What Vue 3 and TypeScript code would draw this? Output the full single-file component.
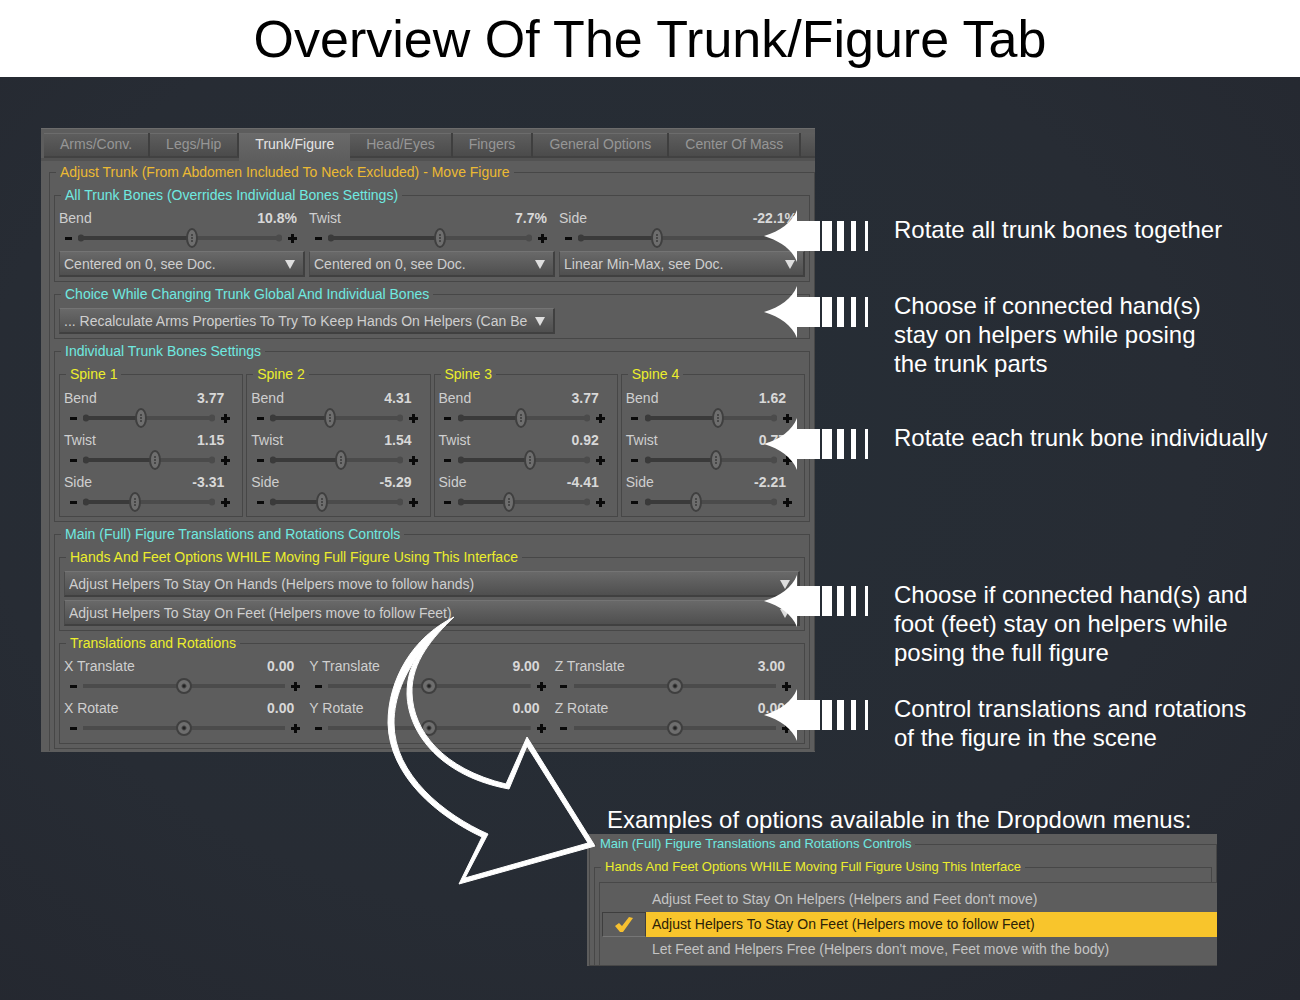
<script setup lang="ts">
import { reactive, ref } from 'vue'

interface Param {
  id: string
  label: string
  value: string
  position: number
  mode?: string
}

interface Bone {
  name: string
  params: Param[]
}

const tabs = ['Arms/Conv.', 'Legs/Hip', 'Trunk/Figure', 'Head/Eyes', 'Fingers', 'General Options', 'Center Of Mass']
const activeTab = ref('Trunk/Figure')

const modes = ['Centered on 0, see Doc.', 'Linear Min-Max, see Doc.']

const trunk = reactive<Param[]>([
  { id: 'trunk-bend', label: 'Bend', value: '10.8%', position: 56, mode: modes[0] },
  { id: 'trunk-twist', label: 'Twist', value: '7.7%', position: 55, mode: modes[0] },
  { id: 'trunk-side', label: 'Side', value: '-22.1%', position: 38, mode: modes[1] },
])

function bone(n: number, rows: [string, string, number][]): Bone {
  return {
    name: `Spine ${n}`,
    params: rows.map(([label, value, position]) => ({ id: `spine${n}-${label.toLowerCase()}`, label, value, position })),
  }
}

const bones = reactive<Bone[]>([
  bone(1, [['Bend', '3.77', 43], ['Twist', '1.15', 55], ['Side', '-3.31', 38]]),
  bone(2, [['Bend', '4.31', 45], ['Twist', '1.54', 54], ['Side', '-5.29', 38]]),
  bone(3, [['Bend', '3.77', 48], ['Twist', '0.92', 55], ['Side', '-4.41', 38]]),
  bone(4, [['Bend', '1.62', 56], ['Twist', '0.77', 54], ['Side', '-2.21', 38]]),
])

const figure = reactive<Param[]>([
  { id: 'x-translate', label: 'X Translate', value: '0.00', position: 50 },
  { id: 'y-translate', label: 'Y Translate', value: '9.00', position: 50 },
  { id: 'z-translate', label: 'Z Translate', value: '3.00', position: 50 },
  { id: 'x-rotate', label: 'X Rotate', value: '0.00', position: 50 },
  { id: 'y-rotate', label: 'Y Rotate', value: '0.00', position: 50 },
  { id: 'z-rotate', label: 'Z Rotate', value: '0.00', position: 50 },
])

const feetOptions = [
  "Adjust Feet to Stay On Helpers (Helpers and Feet don't move)",
  'Adjust Helpers To Stay On Feet (Helpers move to follow Feet)',
  "Let Feet and Helpers Free (Helpers don't move, Feet move with the body)",
]
const feetChoice = ref(feetOptions[1])

const notes: string[][] = [
  ['Rotate all trunk bones together'],
  ['Choose if connected hand(s)', 'stay on helpers while posing', 'the trunk parts'],
  ['Rotate each trunk bone individually'],
  ['Choose if connected hand(s) and', 'foot (feet) stay on helpers while', 'posing the full figure'],
  ['Control translations and rotations', 'of the figure in the scene'],
]

function nudge(p: Param, by: number) {
  p.position = Math.min(100, Math.max(0, p.position + by))
}
</script>

<template>
  <div class="page">
    <header class="title">
      <h1>Overview Of The Trunk/Figure Tab</h1>
    </header>

    <main class="stage">
      <div class="overview">
        <section class="panel">
          <nav class="tabs" role="tablist">
            <button
              v-for="t in tabs"
              :key="t"
              type="button"
              role="tab"
              class="tab"
              :class="{ active: t === activeTab }"
              :aria-selected="t === activeTab"
              @click="activeTab = t"
            >{{ t }}</button>
            <span class="tab-rest"></span>
          </nav>

          <fieldset class="group outer">
            <legend class="orange">Adjust Trunk (From Abdomen Included To Neck Excluded) - Move Figure</legend>

            <fieldset class="group">
              <legend class="cyan">All Trunk Bones (Overrides Individual Bones Settings)</legend>
              <div class="three">
                <div v-for="p in trunk" :key="p.id">
                  <div class="param wide">
                    <div class="head"><label :for="p.id">{{ p.label }}</label><output :for="p.id">{{ p.value }}</output></div>
                    <div class="slide">
                      <button type="button" class="step minus" :aria-label="`Decrease ${p.label}`" @click="nudge(p, -1)"></button>
                      <input :id="p.id" v-model.number="p.position" type="range" min="0" max="100" :style="{ '--fill': p.position + '%' }">
                      <button type="button" class="step plus" :aria-label="`Increase ${p.label}`" @click="nudge(p, 1)"></button>
                    </div>
                  </div>
                  <div class="drop">
                    <select v-model="p.mode" :aria-label="`${p.label} mode`">
                      <option v-for="m in modes" :key="m">{{ m }}</option>
                    </select>
                    <svg viewBox="0 0 10 9" aria-hidden="true"><path d="M0 0H10L5 9Z" /></svg>
                  </div>
                </div>
              </div>
            </fieldset>

            <fieldset class="group">
              <legend class="cyan">Choice While Changing Trunk Global And Individual Bones</legend>
              <div class="three">
                <div class="drop two-wide">
                  <select aria-label="Choice while changing trunk">
                    <option>... Recalculate Arms Properties To Try To Keep Hands On Helpers (Can Be</option>
                  </select>
                  <svg viewBox="0 0 10 9" aria-hidden="true"><path d="M0 0H10L5 9Z" /></svg>
                </div>
              </div>
            </fieldset>

            <fieldset class="group">
              <legend class="cyan">Individual Trunk Bones Settings</legend>
              <div class="four">
                <fieldset v-for="b in bones" :key="b.name" class="group sub bone">
                  <legend class="yellow">{{ b.name }}</legend>
                  <div v-for="p in b.params" :key="p.id" class="param">
                    <div class="head"><label :for="p.id">{{ p.label }}</label><output :for="p.id">{{ p.value }}</output></div>
                    <div class="slide">
                      <button type="button" class="step minus" :aria-label="`Decrease ${p.label}`" @click="nudge(p, -1)"></button>
                      <input :id="p.id" v-model.number="p.position" type="range" min="0" max="100" :style="{ '--fill': p.position + '%' }">
                      <button type="button" class="step plus" :aria-label="`Increase ${p.label}`" @click="nudge(p, 1)"></button>
                    </div>
                  </div>
                </fieldset>
              </div>
            </fieldset>

            <fieldset class="group last">
              <legend class="cyan">Main (Full) Figure Translations and Rotations Controls</legend>
              <fieldset class="group sub">
                <legend class="yellow">Hands And Feet Options WHILE Moving Full Figure Using This Interface</legend>
                <div class="stack">
                  <div class="drop">
                    <select aria-label="Hands option">
                      <option>Adjust Helpers To Stay On Hands (Helpers move to follow hands)</option>
                    </select>
                    <svg viewBox="0 0 10 9" aria-hidden="true"><path d="M0 0H10L5 9Z" /></svg>
                  </div>
                  <div class="drop">
                    <select v-model="feetChoice" aria-label="Feet option">
                      <option v-for="o in feetOptions" :key="o">{{ o }}</option>
                    </select>
                    <svg viewBox="0 0 10 9" aria-hidden="true"><path d="M0 0H10L5 9Z" /></svg>
                  </div>
                </div>
              </fieldset>
              <fieldset class="group sub moves">
                <legend class="yellow">Translations and Rotations</legend>
                <div class="dials">
                  <div v-for="p in figure" :key="p.id" class="param dial">
                    <div class="head"><label :for="p.id">{{ p.label }}</label><output :for="p.id">{{ p.value }}</output></div>
                    <div class="slide">
                      <button type="button" class="step minus" :aria-label="`Decrease ${p.label}`" @click="nudge(p, -1)"></button>
                      <input :id="p.id" v-model.number="p.position" type="range" min="0" max="100">
                      <button type="button" class="step plus" :aria-label="`Increase ${p.label}`" @click="nudge(p, 1)"></button>
                    </div>
                  </div>
                </div>
              </fieldset>
            </fieldset>
          </fieldset>
        </section>

        <div class="notes">
          <div v-for="(lines, i) in notes" :key="i" class="note">
            <svg class="pointer" viewBox="0 0 104 52" aria-hidden="true">
              <path d="M0 26C16 21 28 13 33 0V11H56V41H33V52C28 39 16 31 0 26ZM58 11H68V41H58ZM73 11H80V41H73ZM87 11H92V41H87ZM101 11H104V41H101Z" />
            </svg>
            <p><template v-for="(l, j) in lines" :key="j"><br v-if="j">{{ l }}</template></p>
          </div>
        </div>
      </div>

      <section class="example">
        <h2>Examples of options available in the Dropdown menus:</h2>
        <div class="popup">
          <fieldset class="group">
            <legend class="cyan">Main (Full) Figure Translations and Rotations Controls</legend>
            <fieldset class="group sub">
              <legend class="yellow">Hands And Feet Options WHILE Moving Full Figure Using This Interface</legend>
            </fieldset>
          </fieldset>
          <div class="menu" role="menu">
            <button
              v-for="o in feetOptions"
              :key="o"
              type="button"
              role="menuitemradio"
              class="option"
              :class="{ chosen: o === feetChoice }"
              :aria-checked="o === feetChoice"
              @click="feetChoice = o"
            >
              <span class="mark">
                <svg v-if="o === feetChoice" viewBox="0 0 18 16" aria-hidden="true"><path d="M0 9L4 6L7 9L14 0L18 1L8 15H5Z" /></svg>
              </span>
              <span class="text">{{ o }}</span>
            </button>
          </div>
        </div>
      </section>

      <svg class="swoop" viewBox="0 0 210 270" aria-hidden="true">
        <path
          fill-rule="evenodd"
          d="M69 2C28 22 3 64 3 108C4 162 54 202 97 222L74 269L210 231L142 122L121 169C58 154 28 116 27 78C26 47 48 22 69 2ZM35 38C26 50 22 62 22 79C23 120 58 162 124 174L142 131L203 228L80 263L103 219C60 200 9 160 9 108C9 82 20 58 35 38Z"
        />
      </svg>
    </main>
  </div>
</template>

<style>
body {
  margin: 0;
}
</style>

<style scoped>
.page {
  min-height: 100vh;
  display: flex;
  flex-direction: column;
  font-family: "Liberation Sans", Arial, sans-serif;
  background: #262b33;
}

.title {
  height: 77px;
  display: flex;
  align-items: center;
  justify-content: center;
  background: #fff;
}

.title h1 {
  margin: 0;
  font-size: 52px;
  line-height: 78px;
  font-weight: 400;
  color: #000;
}

.stage {
  position: relative;
  flex: 1;
  padding: 51px 0 35px;
  background: radial-gradient(ellipse at 45% 40%, #262e36 0%, #272c34 60%, #24272f 100%);
}

.overview {
  display: grid;
  grid-template-columns: 723fr 51fr 485fr;
  padding-left: 41px;
}

.panel {
  grid-area: 1 / 1 / 2 / 3;
  min-width: 0;
  padding: 4px 0 0;
  background: #5d5d5d;
  border-top: 1px solid #6c6c6c;
  box-sizing: border-box;
  overflow: hidden;
  font-size: 14px;
  color: #cfcfcf;
}

.tabs {
  display: flex;
  height: 25px;
  padding-left: 3px;
  border-bottom: 3px solid #525252;
}

.tab {
  box-sizing: border-box;
  height: 25px;
  padding: 0 16px;
  border: 0;
  border-right: 2px solid #3f3f3f;
  border-bottom: 2px solid #424242;
  background: linear-gradient(#5e5e5e, #4b4b4b);
  box-shadow: inset 0 1px #6c6c6c;
  font: inherit;
  line-height: 23px;
  color: #969696;
  white-space: nowrap;
}

.tab.active {
  height: 28px;
  padding-bottom: 5px;
  border-right: 0;
  border-bottom: 0;
  background: linear-gradient(#6a6a6a, #5d5d5d);
  color: #e4e4e4;
}

.tab-rest {
  flex: 1;
  border-bottom: 2px solid #424242;
  background: linear-gradient(#5e5e5e, #4b4b4b);
}

.group {
  min-width: 0;
  margin: 0;
  padding: 5px 4px 4px;
  border: 1px solid #474747;
}

.group.outer {
  margin: 2px 0 0 8px;
  padding: 5px 4px 0;
  border-bottom: 0;
}

.group.last {
  margin-bottom: 2px;
}

.group > .group + .group {
  margin-top: 3px;
}

legend {
  margin-left: 2px;
  padding: 0 4px;
  line-height: 18px;
}

.orange {
  color: #ecba33;
}

.cyan {
  color: #6fe9e0;
}

.yellow {
  color: #ecee2c;
}

.three {
  display: grid;
  grid-template-columns: repeat(3, minmax(0, 1fr));
  gap: 4px;
}

.two-wide {
  grid-column: span 2;
}

.four {
  display: grid;
  grid-template-columns: repeat(4, minmax(0, 1fr));
  gap: 3px;
}

.bone.group.group {
  margin: 0;
  padding: 6px 12px 1px 4px;
}

.moves {
  padding-bottom: 2px;
}

.dials {
  display: grid;
  grid-template-columns: repeat(3, minmax(0, 1fr));
}

.stack {
  display: grid;
  gap: 3px;
}

.param {
  height: 42px;
}

.head {
  display: flex;
  justify-content: space-between;
  padding-right: 6px;
  line-height: 18px;
}

.head output {
  font-weight: 700;
  color: #d8d8d8;
}

.wide {
  padding-right: 8px;
}

.wide .head {
  padding-right: 0;
}

.dial {
  padding-right: 9px;
}

.slide {
  display: flex;
  align-items: center;
  gap: 6px;
  height: 22px;
  padding-left: 5px;
}

.step {
  flex: none;
  width: 8px;
  height: 9px;
  padding: 0;
  border: 0;
  background: linear-gradient(#0a0a0a, #0a0a0a) center / 7px 3px no-repeat;
}

.plus {
  width: 9px;
  background: linear-gradient(#0a0a0a, #0a0a0a) center / 9px 3px no-repeat, linear-gradient(#0a0a0a, #0a0a0a) center / 3px 9px no-repeat;
}

input[type="range"] {
  appearance: none;
  flex: 1;
  min-width: 0;
  height: 20px;
  margin: 0;
  background:
    radial-gradient(circle at 3px 50%, #3a3a3a 3px, transparent 4px),
    linear-gradient(#3a3a3a, #3a3a3a) 3px center / var(--fill) 4px no-repeat,
    radial-gradient(circle at calc(100% - 3px) 50%, #4b4b4b 3px, transparent 4px),
    linear-gradient(#4b4b4b, #4b4b4b) 3px center / calc(100% - 6px) 4px no-repeat;
}

input[type="range"]::-webkit-slider-thumb {
  appearance: none;
  width: 12px;
  height: 20px;
  border: 2px solid #3f3f3f;
  border-radius: 50%;
  background: repeating-linear-gradient(#474747 0 2px, #6e6e6e 2px 3px) center / 2px 8px no-repeat #6e6e6e;
}

.dial input[type="range"] {
  background: linear-gradient(#4b4b4b, #4b4b4b) center / 100% 4px no-repeat;
}

.dial input[type="range"]::-webkit-slider-thumb {
  width: 16px;
  height: 16px;
  background: radial-gradient(circle, #222 0 1px, #6e6e6e 3px);
}

.drop {
  position: relative;
}

.drop select {
  appearance: none;
  display: block;
  width: 100%;
  height: 26px;
  padding: 0 24px 0 4px;
  border: 1px solid #4a4a4a;
  border-width: 1px 2px 2px 1px;
  border-top-color: #747474;
  border-right-color: #404040;
  border-bottom-color: #404040;
  border-radius: 0;
  background: linear-gradient(#696969, #4f4f4f);
  font: inherit;
  color: #cfcfcf;
}

.drop svg {
  position: absolute;
  top: 9px;
  right: 10px;
  width: 10px;
  height: 9px;
  fill: #dedede;
  pointer-events: none;
}

.notes {
  grid-area: 1 / 2 / 2 / 4;
  z-index: 1;
  display: grid;
  grid-template-rows: 76px 132px 157px 114px auto;
  padding-top: 82px;
  pointer-events: none;
}

.note {
  display: flex;
  align-items: flex-start;
  gap: 26px;
}

.pointer {
  flex: none;
  width: 104px;
  height: 52px;
  fill: #fff;
}

.note p {
  margin: 5px 0 0;
  font-size: 24px;
  line-height: 29px;
  color: #fff;
  white-space: nowrap;
}

.example {
  margin: 53px 83px 0 587px;
}

.example h2 {
  margin: 0 0 0 20px;
  font-size: 24px;
  line-height: 29px;
  font-weight: 400;
  color: #fff;
  white-space: nowrap;
}

.popup {
  box-sizing: border-box;
  height: 132px;
  padding-top: 1px;
  overflow: hidden;
  background: #5d5d5d;
  font-size: 13px;
}

.popup .group {
  height: 131px;
  margin-left: 2px;
  box-sizing: border-box;
}

.popup .sub {
  margin: 0;
}

.menu {
  position: relative;
  margin: -84px 0 0 12px;
  padding: 4px 0 3px 2px;
  background: #5d5d5d;
  border: 1px solid #484848;
  border-width: 1px 0 1px 1px;
}

.option {
  display: flex;
  width: 100%;
  height: 25px;
  padding: 0;
  border: 0;
  background: none;
  font: inherit;
  font-size: 14px;
  line-height: 25px;
  text-align: left;
  color: #c4c4c4;
}

.mark {
  flex: none;
  display: flex;
  align-items: center;
  justify-content: center;
  box-sizing: border-box;
  width: 44px;
  height: 25px;
}

.chosen .mark {
  border: 1px solid #3e3e3e;
  border-bottom-color: #767676;
}

.mark svg {
  width: 18px;
  height: 16px;
  fill: #f6c030;
}

.text {
  flex: 1;
  padding-left: 6px;
}

.chosen .text {
  background: #f8c52c;
  color: #2b2208;
}

.swoop {
  position: absolute;
  top: 538px;
  left: 385px;
  width: 210px;
  height: 270px;
  fill: #fff;
  stroke: #fff;
  stroke-width: 1px;
  pointer-events: none;
}
</style>
